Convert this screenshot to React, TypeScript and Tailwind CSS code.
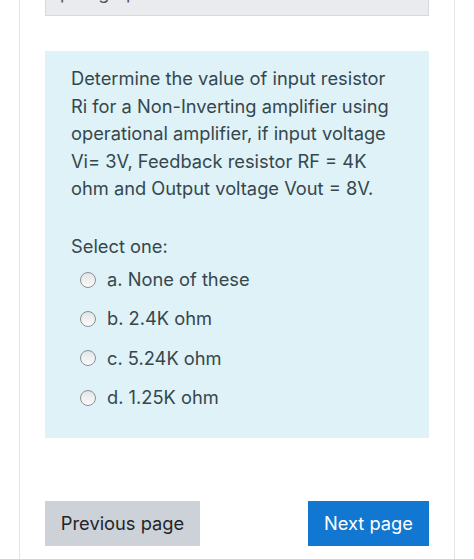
import React from "react";

const font = { fontFamily: 'Inter, "Liberation Sans", Arial, sans-serif' };

function Radio() {
  return (
    <span className="inline-block w-[16px] h-[16px] rounded-full border border-[#8a8f94] bg-gradient-to-b from-[#e2e4e6] to-[#fbfbfb] shrink-0" />
  );
}

export default function App() {
  const options = ["a. None of these", "b. 2.4K ohm", "c. 5.24K ohm", "d. 1.25K ohm"];
  return (
    <div className="w-[474px] h-[559px] bg-white overflow-hidden" style={font}>
      <div className="mx-[19px] h-full border-x border-[#e3e4e6] px-[25px]">
        <div className="h-[16px] bg-[#e9ebee] border border-t-0 border-[#d6d8db] overflow-hidden">
          <div className="-mt-[21px] pl-[14px] text-[18px] leading-[27px] text-[#555]">paragraph</div>
        </div>
        <div className="mt-[35px] h-[387px] bg-[#def2f8] pl-[26px] pt-[14px] text-[#36474d]">
          <p className="w-[332px] text-[18.3px] leading-[27.5px]">
            Determine the value of input resistor Ri for a Non-Inverting amplifier using operational amplifier, if input voltage Vi= 3V, Feedback resistor RF = 4K ohm and Output voltage Vout = 8V.
          </p>
          <div className="mt-[30px] text-[18.3px] leading-[27.5px]">Select one:</div>
          <div className="mt-[6px] flex flex-col gap-[11.8px] pl-[9px]">
            {options.map((o) => (
              <div key={o} className="flex items-center gap-[11px] h-[27.5px] text-[18.3px]">
                <Radio />
                <span>{o}</span>
              </div>
            ))}
          </div>
        </div>
        <div className="mt-[63px] flex justify-between">
          <button className="h-[45px] w-[155px] bg-[#cdd2d9] text-[#212529] text-[18.3px]">Previous page</button>
          <button className="h-[45px] w-[121px] bg-[#1177d1] text-white text-[18.3px]">Next page</button>
        </div>
      </div>
    </div>
  );
}
